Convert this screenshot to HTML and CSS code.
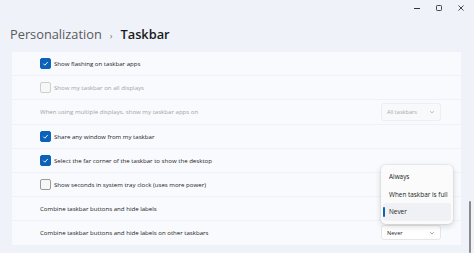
FILE: index.html
```html
<!DOCTYPE html>
<html lang="en">
<head>
  <meta charset="UTF-8">
  <title>Taskbar</title>
  <link rel="stylesheet" href="styles.css">
</head>
<body>

<div class="titlebar">
  <svg class="tb-icon" width="10" height="10" viewBox="0 0 10 10"><path d="M2 5.5h6" stroke="#333" stroke-width="1"/></svg>
  <svg class="tb-icon" width="10" height="10" viewBox="0 0 10 10"><rect x="2.5" y="2.5" width="5" height="5" rx="0.8" fill="none" stroke="#333" stroke-width="0.9"/></svg>
  <svg class="tb-icon" width="10" height="10" viewBox="0 0 10 10"><path d="M2.5 2.5l5 5M7.5 2.5l-5 5" stroke="#333" stroke-width="0.9"/></svg>
</div>

<h1 class="crumbs"><span class="crumb-parent">Personalization</span><span class="crumb-sep">›</span><span class="crumb-current">Taskbar</span></h1>

<div class="settings">
  <div class="row">
    <span class="check checked"><svg width="10" height="10" viewBox="0 0 10 10"><path d="M2.6 5.2l1.7 1.7 3.2-3.6" fill="none" stroke="#fff" stroke-width="1"/></svg></span>
    <span class="label">Show flashing on taskbar apps</span>
  </div>
  <div class="row disabled">
    <span class="check"></span>
    <span class="label">Show my taskbar on all displays</span>
  </div>
  <div class="row disabled text-row">
    <span class="label">When using multiple displays, show my taskbar apps on</span>
    <div class="select">All taskbars<svg width="8" height="8" viewBox="0 0 8 8"><path d="M2.2 3.2l1.8 1.7 1.8-1.7" fill="none" stroke="#aaa" stroke-width="0.8"/></svg></div>
  </div>
  <div class="row">
    <span class="check checked"><svg width="10" height="10" viewBox="0 0 10 10"><path d="M2.6 5.2l1.7 1.7 3.2-3.6" fill="none" stroke="#fff" stroke-width="1"/></svg></span>
    <span class="label">Share any window from my taskbar</span>
  </div>
  <div class="row">
    <span class="check checked"><svg width="10" height="10" viewBox="0 0 10 10"><path d="M2.6 5.2l1.7 1.7 3.2-3.6" fill="none" stroke="#fff" stroke-width="1"/></svg></span>
    <span class="label">Select the far corner of the taskbar to show the desktop</span>
  </div>
  <div class="row">
    <span class="check"></span>
    <span class="label">Show seconds in system tray clock (uses more power)</span>
  </div>
  <div class="row text-row">
    <span class="label">Combine taskbar buttons and hide labels</span>
  </div>
  <div class="row text-row">
    <span class="label">Combine taskbar buttons and hide labels on other taskbars</span>
    <div class="select">Never<svg width="8" height="8" viewBox="0 0 8 8"><path d="M2.2 3.2l1.8 1.7 1.8-1.7" fill="none" stroke="#888" stroke-width="0.8"/></svg></div>
  </div>
</div>

<div class="menu">
  <div class="menu-item">Always</div>
  <div class="menu-item">When taskbar is full</div>
  <div class="menu-item selected">Never</div>
</div>

<div class="scrollbar"></div>

</body>
</html>
```

FILE: styles.css
```css
body {
  margin: 0;
  width: 474px;
  height: 253px;
  overflow: hidden;
  background: #eff3f9;
  font-family: "Open Sans", "Noto Sans", sans-serif;
  color: #1b1b1b;
  position: relative;
}
.titlebar {
  height: 15px;
  display: flex;
  justify-content: flex-end;
  align-items: center;
  gap: 12px;
  padding: 0 8px 0 0;
}
.crumbs {
  margin: 0;
  padding: 13px 0 0 10px;
  height: 27px;
  box-sizing: border-box;
  font-size: 12.8px;
  font-weight: 400;
  display: flex;
  align-items: baseline;
  line-height: 1;
}
.crumb-parent {
  color: #5a5a5a;
}
.crumb-sep {
  color: #777;
  font-size: 9px;
  margin: 0 8px 0 8px;
}
.crumb-current {
  font-weight: 600;
  color: #1a1a1a;
}
.settings {
  margin: 10px 13px 0 12px;
  display: flex;
  flex-direction: column;
  gap: 1px;
}
.row {
  height: 23.2px;
  background: #f9fafd;
  display: flex;
  align-items: center;
  padding: 0 20px 0 28px;
  font-size: 6.1px;
  white-space: nowrap;
}
.row.text-row {
  justify-content: space-between;
}
.row.disabled .label {
  color: #a3a3a3;
}
.check {
  width: 9px;
  height: 9px;
  border-radius: 2px;
  border: 1px solid #9a9a9a;
  background: #f7f7f7;
  margin-right: 3px;
  display: flex;
  align-items: center;
  justify-content: center;
}
.check svg {
  width: 9px;
  height: 9px;
}
.row.disabled .check {
  border-color: #cfcfcf;
}
.check.checked {
  background: #0b62b8;
  border-color: #0b62b8;
}
.select {
  width: 60px;
  height: 15px;
  box-sizing: border-box;
  background: #fff;
  border: 1px solid #e6e6e6;
  border-radius: 3px;
  display: flex;
  align-items: center;
  justify-content: space-between;
  padding: 0 4px 0 5px;
  font-size: 5.6px;
}
.row.disabled .select {
  color: #a8a8a8;
  background: #f8f9fb;
  border-color: #eceef1;
  height: 18px;
}
.menu {
  position: absolute;
  left: 381px;
  top: 165px;
  width: 72px;
  background: #fbfbfc;
  border-radius: 5px;
  box-shadow: 0 2px 6px rgba(0, 0, 0, 0.16), 0 0 0 1px rgba(0, 0, 0, 0.04);
  padding: 3px 2px;
  box-sizing: border-box;
  font-size: 6.4px;
  white-space: nowrap;
}
.menu-item {
  height: 17.5px;
  display: flex;
  align-items: center;
  padding-left: 6px;
  border-radius: 3px;
  position: relative;
}
.menu-item.selected {
  background: #f0f1f4;
}
.menu-item.selected::before {
  content: "";
  position: absolute;
  left: 0;
  top: 4px;
  bottom: 4px;
  width: 2px;
  border-radius: 1px;
  background: #0b62b8;
}
.scrollbar {
  position: absolute;
  left: 469px;
  top: 201px;
  width: 2px;
  height: 52px;
  background: #8a8a8a;
  border-radius: 1px;
}
```
